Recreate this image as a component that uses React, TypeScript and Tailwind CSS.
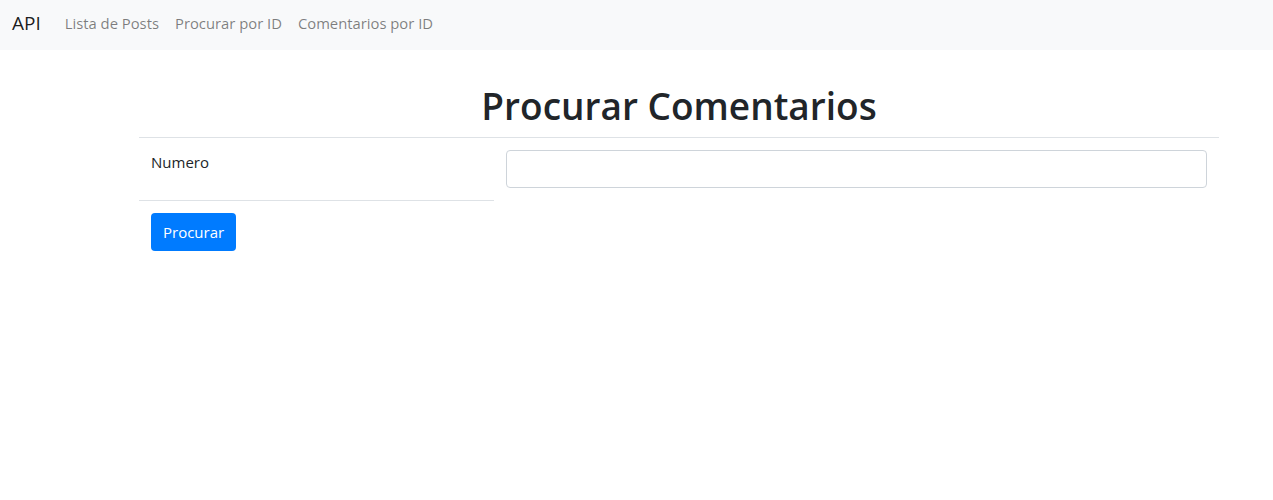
export default function App() {
  const links = ['Lista de Posts', 'Procurar por ID', 'Comentarios por ID'];

  return (
    <div className="min-h-[500px] bg-white font-['Open_Sans',sans-serif] text-[#212529]">
      {/* Navbar */}
      <nav className="flex h-[50px] items-center bg-[#f8f9fa] px-3 pb-[3px]">
        <a href="#" className="mr-4 text-[19px] text-black/90">
          API
        </a>
        <div className="flex">
          {links.map((l) => (
            <a key={l} href="#" className="px-2 text-[14.8px] text-black/50">
              {l}
            </a>
          ))}
        </div>
      </nav>

      {/* Content */}
      <div className="ml-[139px] w-[1080px]">
        <h1 className="mt-[32px] mb-2 text-center text-[37px] font-semibold leading-[47px]">
          Procurar Comentarios
        </h1>
        <div className="grid grid-cols-[355px_725px]">
          <div className="h-[63px] border-t border-[#dee2e6] p-3 text-[15px] leading-6">Numero</div>
          <div className="row-span-2 border-t border-[#dee2e6] p-3">
            <input
              type="text"
              className="block h-[38px] w-full rounded border border-[#ced4da] px-3 outline-none"
            />
          </div>
          <div className="border-t border-[#dee2e6] p-3">
            <button className="h-[38px] rounded bg-[#007bff] px-3 text-[15px] leading-6 text-white">
              Procurar
            </button>
          </div>
        </div>
      </div>
    </div>
  );
}
